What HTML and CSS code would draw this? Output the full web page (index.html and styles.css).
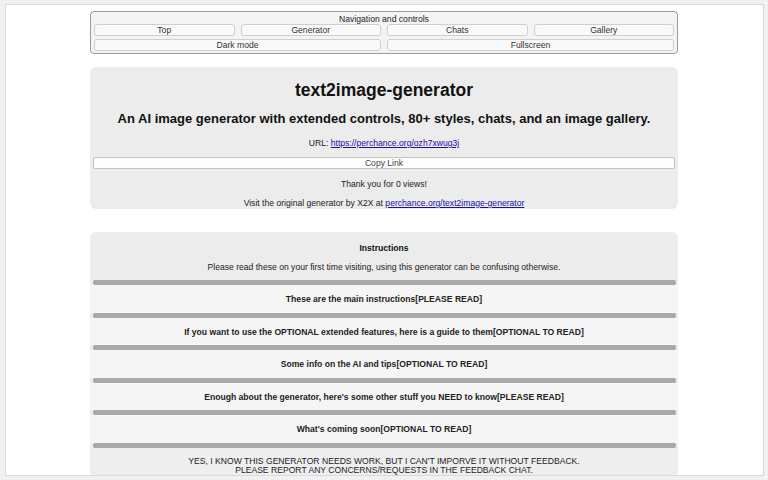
FILE: index.html
```html
<!DOCTYPE html>
<html>
<head>
<meta charset="utf-8">
<link rel="stylesheet" href="styles.css">
</head>
<body>
<div class="panel">
  <div class="column">
    <div class="nav">
      <div class="nav-title">Navigation and controls</div>
      <div class="nav-grid">
        <button class="btn">Top</button>
        <button class="btn">Generator</button>
        <button class="btn">Chats</button>
        <button class="btn">Gallery</button>
        <button class="btn span2">Dark mode</button>
        <button class="btn span2">Fullscreen</button>
      </div>
    </div>

    <div class="card intro">
      <h1 class="title">text2image-generator</h1>
      <h2 class="subtitle">An AI image generator with extended controls, 80+ styles, chats, and an image gallery.</h2>
      <p class="line url">URL: <a href="#">https://perchance.org/ozh7xwug3j</a></p>
      <button class="copy">Copy Link</button>
      <p class="line thanks">Thank you for 0 views!</p>
      <p class="line visit">Visit the original generator by X2X at <a href="#">perchance.org/text2image-generator</a></p>
    </div>

    <div class="card instructions">
      <div class="ins-head">Instructions</div>
      <div class="ins-sub">Please read these on your first time visiting, using this generator can be confusing otherwise.</div>
      <div class="bar"></div>
      <div class="row">These are the main instructions[PLEASE READ]</div>
      <div class="bar"></div>
      <div class="row">If you want to use the OPTIONAL extended features, here is a guide to them[OPTIONAL TO READ]</div>
      <div class="bar"></div>
      <div class="row">Some info on the AI and tips[OPTIONAL TO READ]</div>
      <div class="bar"></div>
      <div class="row">Enough about the generator, here's some other stuff you NEED to know[PLEASE READ]</div>
      <div class="bar"></div>
      <div class="row">What's coming soon[OPTIONAL TO READ]</div>
      <div class="bar"></div>
      <div class="notice">YES, I KNOW THIS GENERATOR NEEDS WORK, BUT I CAN'T IMPORVE IT WITHOUT FEEDBACK.<br>PLEASE REPORT ANY CONCERNS/REQUESTS IN THE FEEDBACK CHAT.</div>
    </div>
  </div>
</div>
</body>
</html>
```
FILE: styles.css
```css
* { box-sizing: border-box; }
html, body {
  margin: 0;
  height: 480px;
  overflow: hidden;
}
body {
  background: #f1f1f1;
  padding: 4px 4px 4px 5px;
  font-family: "Liberation Sans", Arial, sans-serif;
  font-size: 8.6px;
  color: #222;
}
.panel {
  height: 472px;
  background: #fff;
  border: 1px solid #dadada;
  padding-top: 6px;
  overflow: hidden;
}
.column {
  width: 588px;
  margin-left: 84px;
}
.nav {
  border: 1px solid #9c9c9c;
  border-radius: 4px;
  background: #f3f3f3;
  padding: 0 3px 2px 3px;
  margin-bottom: 13px;
}
.nav-title {
  text-align: center;
  line-height: 10px;
  height: 12px;
  padding-top: 2px;
}
.nav-grid {
  display: grid;
  grid-template-columns: repeat(4, 1fr);
  gap: 3px 6px;
}
.btn {
  font: inherit;
  font-size: 8.6px;
  color: #333;
  height: 12px;
  line-height: 10px;
  padding: 0;
  background: #f9f9f9;
  border: 1px solid #cfcfcf;
  border-radius: 3px;
}
.span2 { grid-column: span 2; }

.card {
  background: #ececec;
  border-radius: 6px;
  text-align: center;
}
.intro {
  padding: 13px 3px 1px 3px;
  margin-bottom: 23px;
}
.title {
  margin: 0;
  font-size: 17.5px;
  line-height: 20px;
  font-weight: bold;
  color: #111;
}
.subtitle {
  margin: 11px 0 0 0;
  font-size: 13px;
  line-height: 16px;
  font-weight: bold;
  color: #111;
}
.line {
  margin: 0;
  line-height: 10px;
}
.url { margin-top: 11px; }
.thanks { margin-top: 10px; }
.visit { margin-top: 9px; }
a { color: #1a0dab; text-decoration: underline; }
.copy {
  display: block;
  width: 100%;
  margin-top: 9px;
  height: 12px;
  padding: 0;
  font: inherit;
  font-size: 8.6px;
  line-height: 10px;
  color: #444;
  background: #fdfdfd;
  border: 1px solid #c4c4c4;
  border-radius: 2px;
}

.instructions {
  padding-top: 11px;
  padding-bottom: 20px;
}
.ins-head {
  font-weight: bold;
  line-height: 10px;
  color: #111;
}
.ins-sub {
  margin-top: 9px;
  line-height: 10px;
  margin-bottom: 8px;
}
.bar {
  height: 5px;
  margin: 0 2px 0 3px;
  background: #a9a9a9;
  border-radius: 2px;
}
.row {
  height: 27.5px;
  line-height: 28px;
  background: #f5f5f5;
  font-weight: bold;
  color: #222;
}
.notice {
  padding-top: 9px;
  line-height: 9.5px;
  background: #eeeeee;
  text-transform: uppercase;
}
```
